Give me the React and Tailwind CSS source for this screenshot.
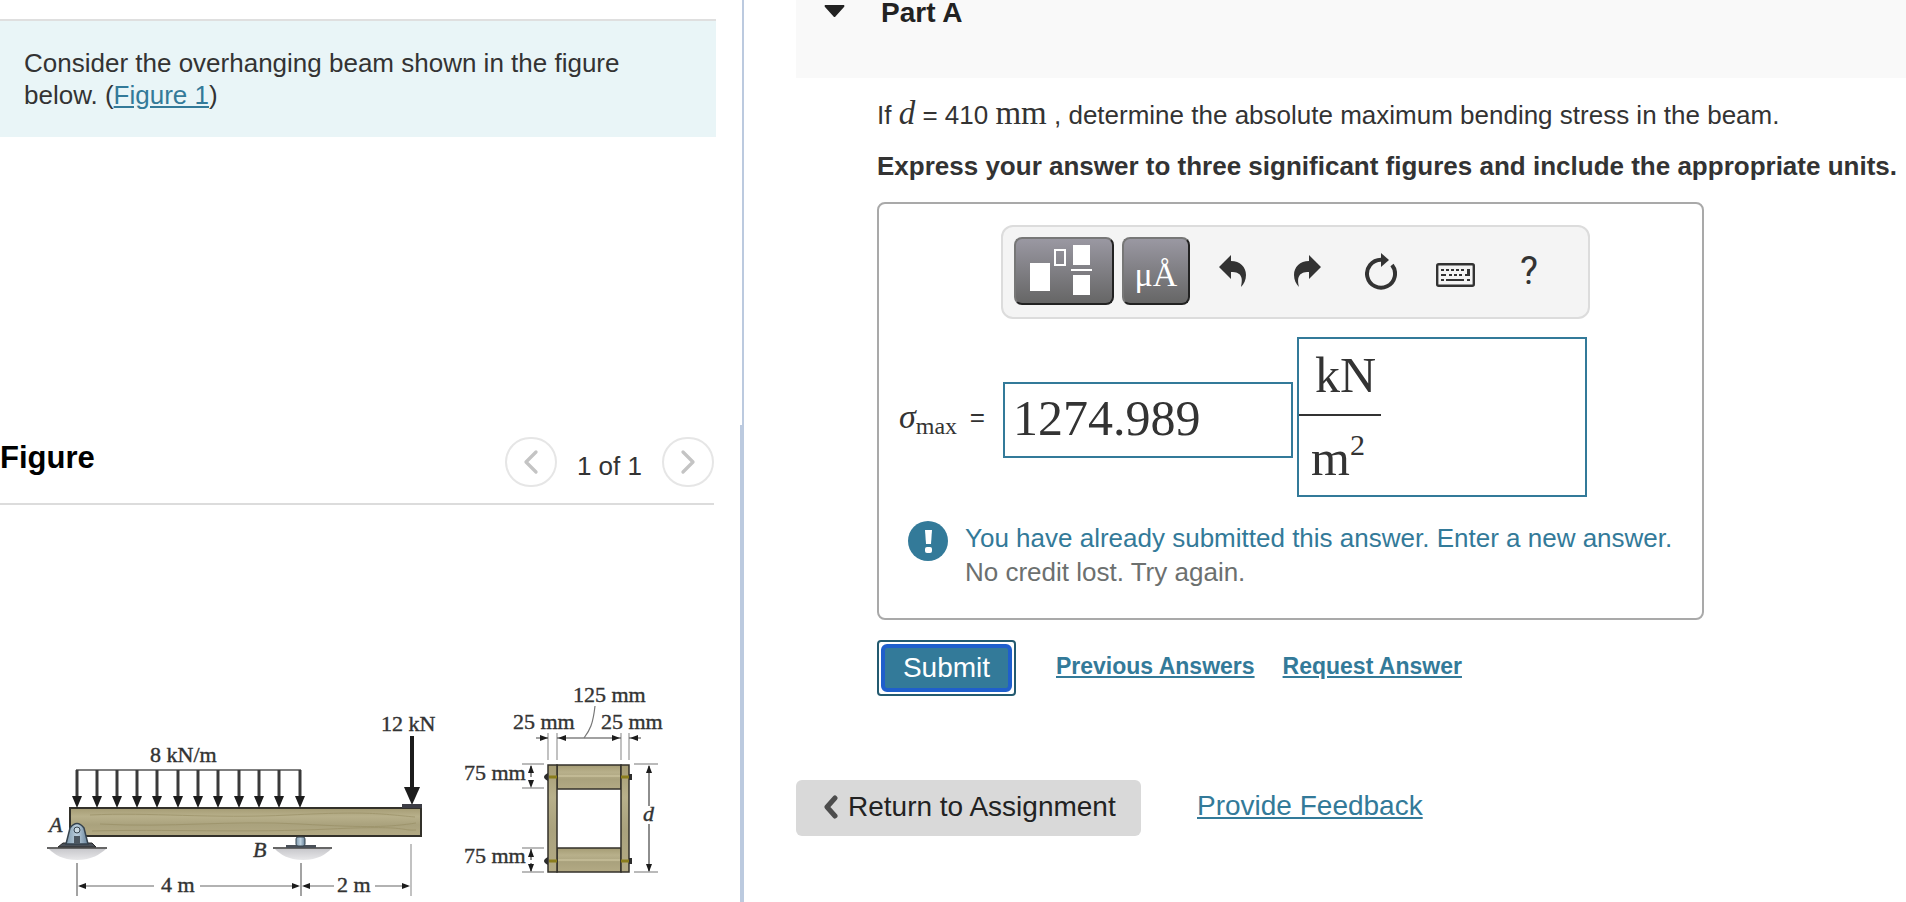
import { ChevronLeft, ChevronRight } from "lucide-react";
import React from "react";

const LOAD_ARROWS = [77, 97, 117, 137, 157, 178, 198, 218, 239, 259, 279, 300];

// small filled arrow head, (x, y) is the tip
const Head = ({ x, y, dir, len = 8, half = 3 }) => {
  const points = {
    left: `${x},${y} ${x + len},${y - half} ${x + len},${y + half}`,
    right: `${x},${y} ${x - len},${y - half} ${x - len},${y + half}`,
    up: `${x},${y} ${x - half},${y + len} ${x + half},${y + len}`,
    down: `${x},${y} ${x - half},${y - len} ${x + half},${y - len}`,
  };
  return <polygon points={points[dir]} fill="#1c1c1c" />;
};

const BeamFigure = () => (
  <svg viewBox="0 670 740 232" className="block w-full" role="img" aria-label="Overhanging beam and its cross section">
    <defs>
      <linearGradient id="wood" x1="0" y1="0" x2="0" y2="1">
        <stop offset="0" stopColor="#a59c74" />
        <stop offset="0.3" stopColor="#b8b08b" />
        <stop offset="0.6" stopColor="#aaa27d" />
        <stop offset="1" stopColor="#b3aa84" />
      </linearGradient>
      <linearGradient id="steel" x1="0" y1="0" x2="1" y2="0">
        <stop offset="0" stopColor="#7d98ad" />
        <stop offset="0.5" stopColor="#bccfdd" />
        <stop offset="1" stopColor="#66829a" />
      </linearGradient>
      <linearGradient id="ground" x1="0" y1="0" x2="0" y2="1">
        <stop offset="0" stopColor="#c8c8cc" />
        <stop offset="1" stopColor="#e8e8ea" />
      </linearGradient>
    </defs>

    {/* beam */}
    <rect x="70" y="808" width="351" height="28" fill="url(#wood)" stroke="#33312a" strokeWidth="2" />
    <g stroke="#968c62" strokeWidth="1" fill="none" opacity="0.6">
      <path d="M90 815 C150 812 210 819 290 815 S380 814 415 817" />
      <path d="M100 824 C170 828 230 820 300 824 S390 827 416 823" />
      <path d="M92 831 C160 829 250 833 330 829 S400 831 416 830" />
    </g>

    {/* distributed load */}
    <path d="M76 770 H301" stroke="#555" strokeWidth="1.5" />
    {LOAD_ARROWS.map((x) => (
      <g key={x}>
        <path d={`M${x} 770 V797`} stroke="#3a3a3a" strokeWidth="3" />
        <Head x={x} y={808} dir="down" len={12} half={5} />
      </g>
    ))}

    {/* point load */}
    <path d="M412 736 V790" stroke="#1c1c1c" strokeWidth="4" />
    <Head x={412} y={805} dir="down" len={18} half={8} />
    <rect x="402" y="804" width="20" height="4" fill="#3d3d45" />

    {/* support A */}
    <path d="M49 849 H106 C100 854 92 860 77 860 S54 854 49 849Z" fill="url(#ground)" />
    <path d="M47 848 H107" stroke="#666" strokeWidth="2" />
    <path d="M58 847 L63 843 H92 L96 847Z" fill="#4a5058" stroke="#2b2b2b" />
    <path d="M66 844 L70 828 Q77 819 84 828 L88 844Z" fill="url(#steel)" stroke="#35424d" strokeWidth="1.5" />
    <circle cx="77" cy="830" r="3" fill="#cbdae4" stroke="#35424d" />
    <rect x="74" y="836" width="6" height="8" fill="#4b5660" />

    {/* support B */}
    <path d="M275 849 H331 C326 854 318 860 303 860 S280 854 275 849Z" fill="url(#ground)" />
    <path d="M273 848 H332" stroke="#666" strokeWidth="2" />
    <path d="M286 845 H316 V848 H286Z" fill="#4a5058" />
    <rect x="296" y="837" width="9" height="9" rx="2" fill="url(#steel)" stroke="#35424d" />

    {/* span dimensions */}
    <g stroke="#666" strokeWidth="1.2">
      <path d="M77 863 V896" />
      <path d="M301 863 V896" />
      <path d="M411 844 V896" stroke="#999" />
      <path d="M80 886 H154 M200 886 H298 M304 886 H334 M375 886 H408" />
    </g>
    <Head x={78} y={886} dir="left" />
    <Head x={300} y={886} dir="right" />
    <Head x={302} y={886} dir="left" />
    <Head x={410} y={886} dir="right" />

    {/* cross section */}
    <g fill="url(#wood)" stroke="#33312a" strokeWidth="1.5">
      <rect x="557" y="765" width="64" height="24" />
      <rect x="557" y="848" width="64" height="24" />
      <rect x="548" y="765" width="9" height="107" />
      <rect x="621" y="765" width="8" height="107" />
    </g>
    <g stroke="#d3cba6" strokeWidth="1">
      <path d="M558 776 H620 M558 860 H620" />
    </g>
    <g stroke="#8a7d1d" strokeWidth="3">
      <path d="M549 777 H557 M621 777 H629 M549 861 H557 M621 861 H629" />
    </g>
    <g fill="#2d2d2d">
      <path d="M548 773 Q540 777 548 781Z M548 857 Q540 861 548 865Z" />
      <rect x="629" y="774" width="3" height="6" />
      <rect x="629" y="858" width="3" height="6" />
    </g>

    {/* section dimensions */}
    <g stroke="#777" strokeWidth="1.2" fill="none">
      <path d="M548 733 V760 M557 733 V760 M621 733 V760 M629 733 V760" stroke="#999" />
      <path d="M536 738 H548 M557 738 H621 M629 738 H641" stroke="#444" />
      <path d="M595 706 C593 724 590 730 584 738" />
      <path d="M522 764 H544 M522 788 H544 M522 848 H544 M522 872 H544" />
      <path d="M531 766 V787 M531 849 V871" strokeDasharray="4 3" stroke="#444" />
      <path d="M634 764 H658 M634 872 H658" />
      <path d="M649 766 V806 M649 824 V871" stroke="#444" />
    </g>
    <Head x={548} y={738} dir="right" />
    <Head x={558} y={738} dir="left" />
    <Head x={620} y={738} dir="right" />
    <Head x={630} y={738} dir="left" />
    <Head x={531} y={765} dir="up" />
    <Head x={531} y={788} dir="down" />
    <Head x={531} y={849} dir="up" />
    <Head x={531} y={872} dir="down" />
    <Head x={649} y={765} dir="up" />
    <Head x={649} y={872} dir="down" />

    <g fill="#333" stroke="#333" strokeWidth="0.4" fontFamily="'Liberation Serif', serif" fontSize="22">
      <text x="150" y="762">8 kN/m</text>
      <text x="381" y="731">12 kN</text>
      <text x="49" y="832" fontStyle="italic">A</text>
      <text x="253" y="857" fontStyle="italic">B</text>
      <text x="161" y="892">4 m</text>
      <text x="337" y="892">2 m</text>
      <text x="573" y="702">125 mm</text>
      <text x="513" y="729">25 mm</text>
      <text x="601" y="729">25 mm</text>
      <text x="464" y="780">75 mm</text>
      <text x="464" y="863">75 mm</text>
      <text x="643" y="821" fontStyle="italic">d</text>
    </g>
  </svg>
);

const PagerButton = ({ label, children }) => (
  <button type="button" aria-label={label} className="flex h-[50px] w-[52px] items-center justify-center rounded-full border-2 border-[#e6e6e6] text-[#c4c4c4]">
    {children}
  </button>
);

const ToolButton = ({ label, children }) => (
  <button type="button" aria-label={label} className="flex h-[68px] w-[74px] items-center justify-center text-[#333]">
    {children}
  </button>
);

const Toolbar = () => (
  <div className="flex h-[94px] w-[589px] items-center rounded-xl border-2 border-[#dcdcdc] bg-[#f4f4f4] pb-0.5 pl-[11px]">
    <button type="button" aria-label="Templates" className="mr-2 h-[68px] w-[100px] rounded-lg border-2 border-t-[#777] border-l-[#777] border-r-[#222] border-b-[#222] bg-linear-to-b from-[#9a98a2] to-[#666]">
      <svg viewBox="0 0 96 64" className="h-16 w-24">
        <g fill="#fff">
          <rect x="14" y="24" width="20" height="28" />
          <rect x="57" y="6" width="17" height="20" />
          <rect x="55" y="30" width="21" height="2" />
          <rect x="57" y="36" width="17" height="20" />
        </g>
        <rect x="39" y="11" width="10" height="15" fill="none" stroke="#fff" strokeWidth="2" />
      </svg>
    </button>
    <button type="button" aria-label="Symbols" className="mr-1.5 h-[68px] w-[68px] rounded-lg border-2 border-t-[#777] border-l-[#777] border-r-[#222] border-b-[#222] bg-linear-to-b from-[#9a98a2] to-[#666] pt-2 font-['Liberation_Serif',serif] text-[34px] leading-8 text-white">
      μÅ
    </button>
    <ToolButton label="Undo">
      <svg viewBox="0 0 28 32" className="h-8 w-7" fill="currentColor">
        <path d="M0 12 L12 0 V6 C21 6 27 12 27 20 C27 25 25 29 22 32 C24 23 23 17 12 17 V24Z" />
      </svg>
    </ToolButton>
    <ToolButton label="Redo">
      <svg viewBox="0 0 28 32" className="h-8 w-7" fill="currentColor">
        <path d="M28 12 L16 0 V6 C7 6 1 12 1 20 C1 25 3 29 6 32 C4 23 5 17 16 17 V24Z" />
      </svg>
    </ToolButton>
    <ToolButton label="Reset">
      <svg viewBox="0 0 32 37" className="h-[37px] w-8">
        <path d="M17 6.7 H16 A14 14 0 1 0 27 12" fill="none" stroke="currentColor" strokeWidth="4" />
        <path d="M16 0 L24 7 L16 14Z" fill="currentColor" />
      </svg>
    </ToolButton>
    <ToolButton label="Keyboard">
      <svg viewBox="0 0 39 24" className="mt-2 h-6 w-[39px]" fill="currentColor">
        <rect x="1.2" y="1.2" width="36.6" height="21.6" rx="1.5" fill="none" stroke="currentColor" strokeWidth="2.4" />
        <path d="M5 6h3v2H5zM10 6h3v2h-3zM15 6h3v2h-3zM20 6h3v2h-3zM25 6h3v2h-3zM31 6h3v7h-5v-2h2zM5 11h5v2H5zM13 11h3v2h-3zM18 11h3v2h-3zM23 11h3v2h-3zM5 16h3v2H5zM10 16h18v2H10zM31 16h3v2h-3z" />
      </svg>
    </ToolButton>
    <ToolButton label="Help">
      <span className="font-[Roboto,sans-serif] text-[38px] leading-9">?</span>
    </ToolButton>
  </div>
);

export default function App() {
  return (
    <div className="flex min-h-screen bg-white font-['Liberation_Sans',Arial,sans-serif] text-[26px] leading-8 text-[#333]">
      <aside className="flex w-[39%] min-w-[744px] shrink-0 flex-col">
        <div className="min-h-[425px] border-r-2 border-[#bccadf] pt-[19px] pr-[26px]">
          <p className="border-t-2 border-[#dfdfdf] bg-[#e9f5f7] px-6 py-[26px]">
            Consider the overhanging beam shown in the figure below. (<a href="#figure" className="text-[#337a99] underline">Figure 1</a>)
          </p>
        </div>
        <section id="figure" className="flex grow flex-col border-r-4 border-[#bccadf]">
          <div className="mr-[26px] flex h-20 items-center justify-between border-b-2 border-[#dcdcdc] pb-1">
            <h2 className="pb-2 text-[31px] font-bold text-black">Figure</h2>
            <div className="flex items-center gap-5">
              <PagerButton label="Previous figure">
                <ChevronLeft size={40} strokeWidth={2} />
              </PagerButton>
              <span className="pt-2">1 of 1</span>
              <PagerButton label="Next figure">
                <ChevronRight size={40} strokeWidth={2} />
              </PagerButton>
            </div>
          </div>
          <div className="mt-auto">
            <BeamFigure />
          </div>
        </section>
      </aside>

      <main className="min-w-0 grow pl-[52px]">
        <header className="flex h-[78px] items-start gap-9 bg-[#f9f9f9] pl-7">
          <svg viewBox="0 0 21 12" className="mt-[5px] h-3 w-[21px]" fill="#222">
            <path d="M1 0 H20 Q21 1 20 2 L11 12 H10 L1 2 Q0 1 1 0Z" />
          </svg>
          <h1 className="text-[28px] leading-[26px] font-bold text-[#222]">Part A</h1>
        </header>

        <div className="pl-[81px]">
          <p className="pt-[19px] whitespace-nowrap">
            If <i className="font-['Liberation_Serif',serif] text-[33px] leading-none">d</i> = 410 <span className="font-['Liberation_Serif',serif] text-[33px] leading-none">mm</span> , determine the absolute maximum bending stress in the beam.
          </p>
          <p className="pt-[19px] font-bold whitespace-nowrap">
            Express your answer to three significant figures and include the appropriate units.
          </p>

          <form className="mt-5 w-[827px] rounded-lg border-2 border-[#a9a9a9] pt-[21px] pb-[29px]">
            <div className="pl-[122px]">
              <Toolbar />
            </div>
            <div className="mt-[18px] flex items-center pl-5">
              <label htmlFor="answer" className="flex w-[104px] items-center justify-between pr-[18px] font-['Liberation_Serif',serif] text-[34px]">
                <span><i>σ</i><sub className="text-[24px]">max</sub></span>
                <span className="font-['Liberation_Sans',sans-serif] text-[26px]">=</span>
              </label>
              <input id="answer" type="text" defaultValue="1274.989" className="mt-1.5 mr-1 h-[76px] w-[290px] border-2 border-[#337a99] px-2 pb-1 font-['Liberation_Serif',serif] text-[50px] outline-none" />
              <div role="textbox" aria-label="Units" className="h-[160px] w-[290px] border-2 border-[#337a99] font-['Liberation_Serif',serif] text-[50px] leading-[72px]">
                <div className="w-[82px] border-b-2 border-[#333] pb-[3px] pl-4">kN</div>
                <div className="pt-1.5 pl-3">m<sup className="static align-[20px] text-[30px] leading-none">2</sup></div>
              </div>
            </div>
            <div className="mt-6 flex gap-[17px] pl-[29px]">
              <svg viewBox="0 0 40 40" className="h-10 w-10">
                <circle cx="20" cy="20" r="20" fill="#337a99" />
                <path d="M17 9 H24 L23 23 H18Z" fill="#fff" />
                <rect x="17" y="26" width="7" height="6" rx="2" fill="#fff" />
              </svg>
              <p className="leading-[34px] whitespace-nowrap text-[#6c706f]">
                <span className="block text-[#337a99]">You have already submitted this answer. Enter a new answer.</span>
                No credit lost. Try again.
              </p>
            </div>
          </form>

          <div className="mt-5 flex items-center text-[23px] font-bold text-[#337a99]">
            <button type="button" className="mr-10 rounded-[4px] border-2 border-[#235a70] bg-white p-0.5 text-[28px] font-normal text-white">
              <span className="block h-12 w-[131px] rounded-md border-4 border-[#1f5fcc] bg-[#337a99] leading-10">Submit</span>
            </button>
            <div className="flex gap-7 pb-1">
              <a href="#previous" className="underline">Previous Answers</a>
              <a href="#request" className="underline">Request Answer</a>
            </div>
          </div>
        </div>

        <div className="mt-[84px] flex items-center text-[28px]">
          <button type="button" className="mr-14 flex h-14 w-[345px] items-center gap-2 rounded-md bg-[#d9d9d9] pb-0.5 pl-[26px] text-[#222]">
            <svg viewBox="0 0 18 24" className="h-6 w-[18px]" fill="none" stroke="#4d4d4d" strokeWidth="5" strokeLinecap="round" strokeLinejoin="round">
              <path d="M13 3 L5 12 L13 21" />
            </svg>
            Return to Assignment
          </button>
          <a href="#feedback" className="pb-1 text-[#337a99] underline">Provide Feedback</a>
        </div>
      </main>
    </div>
  );
}
